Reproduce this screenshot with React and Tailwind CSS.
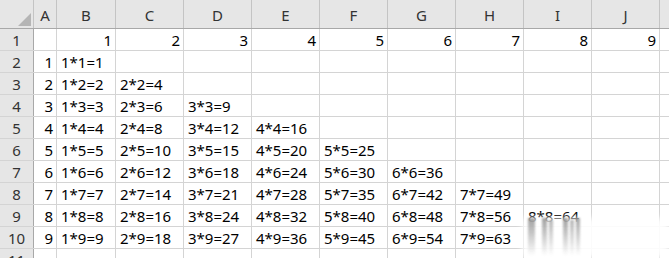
import React from "react";

const cols = ["A", "B", "C", "D", "E", "F", "G", "H", "I", "J"];
const widths = ["w-[23px]", "w-[59px]", "w-[68px]", "w-[68px]", "w-[68px]", "w-[68px]", "w-[68px]", "w-[68px]", "w-[68px]", "w-[68px]"];

function cellContent(r, c) {
  if (r === 1) {
    if (c === 0) return { t: "", right: false };
    return { t: String(c), right: true };
  }
  if (r >= 2 && r <= 10) {
    const i = r - 1;
    if (c === 0) return { t: String(i), right: true };
    const j = c;
    if (j <= i && j <= 8 && !(i === 9 && j === 8)) return { t: `${j}*${i}=${i * j}`, right: false };
  }
  return { t: "", right: false };
}

export default function App() {
  const rows = [1, 2, 3, 4, 5, 6, 7, 8, 9, 10, 11];
  return (
    <div
      className="relative w-[669px] h-[258px] overflow-hidden bg-white text-[15px] text-black"
      style={{ fontFamily: '"Noto Sans", "Noto Sans CJK SC", sans-serif' }}
    >
      <div className="flex h-[29px] bg-[#e6e6e6] border-b border-[#a8a8a8]">
        <div className="relative w-[34px] shrink-0 border-r border-[#c4c4c4]">
          <svg className="absolute left-[18px] top-[13px]" width="13" height="13" viewBox="0 0 13 13">
            <polygon points="13,0 13,13 0,13" fill="#b5b5b5" />
          </svg>
        </div>
        {cols.map((c, i) => (
          <div
            key={c}
            className={`${widths[i]} shrink-0 border-r border-[#c4c4c4] flex items-end justify-center pb-[2px] text-[#333] leading-none`}
          >
            <span className="pb-[3px]">{c}</span>
          </div>
        ))}
        <div className="flex-1" />
      </div>
      {rows.map((r) => (
        <div key={r} className="flex h-[22px] border-b border-[#d4d4d4]">
          <div className="w-[34px] shrink-0 bg-[#e6e6e6] border-r border-[#a8a8a8] flex items-center justify-center text-[#333] leading-none">
            <span className="pt-[1px]">{r}</span>
          </div>
          {cols.map((c, i) => {
            const { t, right } = cellContent(r, i);
            return (
              <div
                key={c}
                className={`${widths[i]} shrink-0 border-r border-[#d4d4d4] flex items-center whitespace-nowrap leading-none ${
                  right ? "justify-end pr-[3px]" : "justify-start pl-[4px]"
                }`}
              >
                <span className="pt-[1px]">{t}</span>
              </div>
            );
          })}
          <div className="flex-1" />
        </div>
      ))}
      {/* watermark overlay */}
      <div className="absolute left-[522px] top-[218px] w-[147px] h-[40px] bg-white/90 blur-[3px]" />
      <div className="absolute left-[528px] top-[218px] w-[7px] h-[38px] bg-gradient-to-b from-[#8a8a8a] to-transparent blur-[1px] opacity-80" />
      <div className="absolute left-[542px] top-[218px] w-[5px] h-[38px] bg-gradient-to-b from-[#8a8a8a] to-transparent blur-[1px] opacity-80" />
      <div className="absolute left-[549px] top-[220px] w-[4px] h-[36px] bg-gradient-to-b from-[#999] to-transparent blur-[1px] opacity-70" />
      <div className="absolute left-[563px] top-[218px] w-[5px] h-[38px] bg-gradient-to-b from-[#8a8a8a] to-transparent blur-[1px] opacity-80" />
      <div className="absolute left-[570px] top-[220px] w-[4px] h-[36px] bg-gradient-to-b from-[#999] to-transparent blur-[1px] opacity-70" />
      <div className="absolute left-[576px] top-[218px] w-[4px] h-[38px] bg-gradient-to-b from-[#8a8a8a] to-transparent blur-[1px] opacity-75" />
    </div>
  );
}
